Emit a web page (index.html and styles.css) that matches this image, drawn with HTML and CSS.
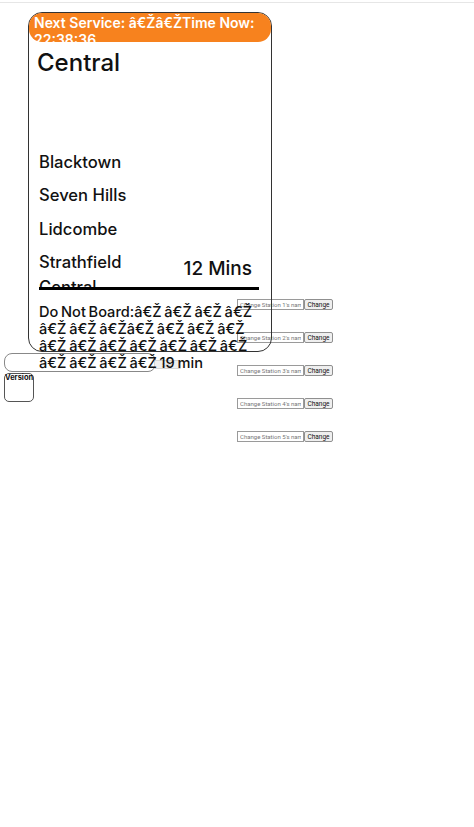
FILE: index.html
```html
<!DOCTYPE html>
<html lang="en">
<head>
<meta charset="utf-8">
<title>Next Service</title>
<link rel="stylesheet" href="styles.css">
</head>
<body>
<div class="topbar"></div>
<div class="layout">
  <div class="left-col">
    <div class="card">
      <div class="card-head">Next Service: â€Žâ€ŽTime Now: 22:38:36</div>
      <div class="dest">Central</div>
      <div class="service">
        <ul class="stops">
          <li>Blacktown</li>
          <li>Seven Hills</li>
          <li>Lidcombe</li>
          <li>Strathfield Central</li>
        </ul>
        <div class="mins">12 Mins</div>
      </div>
      <div class="rule"></div>
      <div class="dnb">Do Not Board:â€Ž â€Ž â€Ž â€Ž â€Ž â€Ž â€Žâ€Ž â€Ž â€Ž â€Ž â€Ž â€Ž â€Ž â€Ž â€Ž â€Ž â€Ž â€Ž â€Ž â€Ž â€Ž 19 min</div>
    </div>
    <div class="extra">
      <div class="extra-box"></div>
      <button class="extra-btn" type="button">Save</button>
    </div>
    <div class="version">Version</div>
  </div>
  <div class="controls">
    <div class="ctl"><input type="text" placeholder="Change Station 1's name"><button type="button">Change</button></div>
    <div class="ctl"><input type="text" placeholder="Change Station 2's name"><button type="button">Change</button></div>
    <div class="ctl"><input type="text" placeholder="Change Station 3's name"><button type="button">Change</button></div>
    <div class="ctl"><input type="text" placeholder="Change Station 4's name"><button type="button">Change</button></div>
    <div class="ctl"><input type="text" placeholder="Change Station 5's name"><button type="button">Change</button></div>
  </div>
</div>
</body>
</html>
```
FILE: styles.css
```css
html, body {
  margin: 0;
  padding: 0;
  background: #ffffff;
  font-family: Inter, "Liberation Sans", sans-serif;
  color: #111111;
}
.topbar {
  height: 2px;
  border-bottom: 1px solid #e6e6e6;
}
.layout {
  display: flex;
  align-items: flex-start;
}
.left-col {
  padding-left: 4px;
  display: flex;
  flex-direction: column;
  align-items: flex-start;
  width: 268px;
  flex: none;
}
.card {
  position: relative;
  z-index: 2;
  margin-top: 9px;
  margin-left: 24px;
  width: 242px;
  height: 338px;
  border: 1px solid #333333;
  border-radius: 14px;
}
.card-head {
  height: 29px;
  background: #f7821e;
  border-radius: 13px;
  color: #ffffff;
  font-weight: 600;
  font-size: 14px;
  line-height: 17px;
  padding: 1px 0 0 5px;
  box-sizing: border-box;
}
.dest {
  font-size: 24px;
  font-weight: 500;
  line-height: 30px;
  padding-left: 8px;
  margin-top: 6px;
}
.service {
  display: flex;
  justify-content: space-between;
  align-items: flex-end;
  height: 209px;
  padding: 0 19px 0 10px;
  overflow: hidden;
}
.stops {
  list-style: none;
  margin: 71.5px 0 0 0;
  padding: 0;
  width: 140px;
  align-self: flex-start;
  font-size: 16.6px;
  font-weight: 500;
  line-height: 25px;
}
.stops li {
  margin-bottom: 8.5px;
}
.mins {
  font-size: 19px;
  font-weight: 500;
  line-height: 24px;
  margin-bottom: 6px;
}
.rule {
  height: 3px;
  background: #000000;
  margin: 0 12px 0 10px;
}
.dnb {
  padding: 14px 12px 0 10px;
  font-size: 14.6px;
  font-weight: 500;
  line-height: 17px;
  word-spacing: -1.2px;
}
.extra {
  display: flex;
  align-items: center;
  margin-top: 1px;
}
.extra-box {
  width: 150px;
  height: 17px;
  border: 1px solid #888888;
  border-radius: 8px;
}
.extra-btn {
  margin-left: -2px;
  width: 27px;
  height: 9px;
  padding: 0;
  font-size: 5px;
  color: #bbbbbb;
  background: #efefef;
  border: 1px solid #d5d5d5;
  border-radius: 1px;
  position: relative;
  top: 2px;
}
.version {
  margin-top: 1px;
  width: 28px;
  height: 27px;
  border: 1px solid #555555;
  border-radius: 5px;
  font-size: 7.5px;
  font-weight: 700;
  line-height: 7px;
  color: #111111;
  white-space: nowrap;
}
.controls {
  margin-left: -35px;
  padding-top: 296px;
  display: flex;
  flex-direction: column;
  gap: 22px;
}
.ctl {
  display: flex;
  align-items: stretch;
  height: 11px;
}
.ctl input {
  width: 67px;
  height: 11px;
  box-sizing: border-box;
  padding: 0 2px;
  font-family: Roboto, "Liberation Sans", sans-serif;
  font-size: 6px;
  border: 1px solid #9a9a9a;
  border-radius: 0;
  margin: 0;
}
.ctl input::placeholder {
  color: #777777;
}
.ctl button {
  width: 29px;
  height: 11px;
  box-sizing: border-box;
  padding: 0;
  font-family: Roboto, "Liberation Sans", sans-serif;
  font-size: 6.5px;
  color: #111111;
  background: #efefef;
  border: 1px solid #8f8f8f;
  border-radius: 2px;
  margin: 0;
}
```
